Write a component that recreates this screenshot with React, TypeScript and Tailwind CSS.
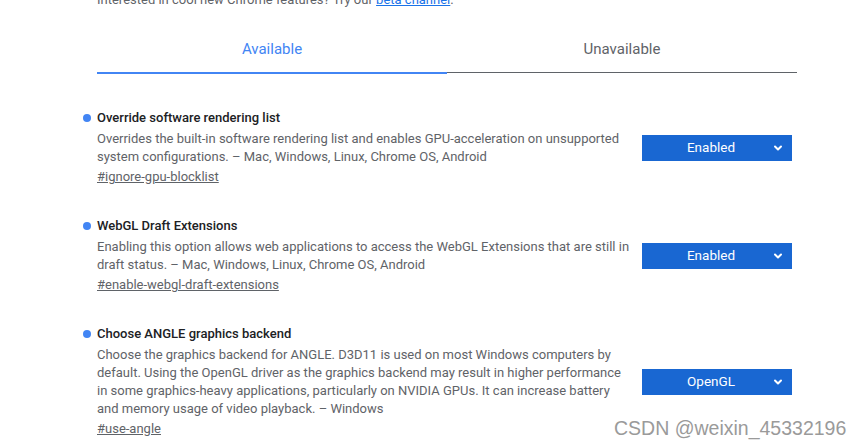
import { ChevronDown } from 'lucide-react'

type Flag = {
  title: string
  desc: string
  tag: string
  value: string
}

const flags: Flag[] = [
  {
    title: 'Override software rendering list',
    desc: 'Overrides the built-in software rendering list and enables GPU-acceleration on unsupported system configurations. – Mac, Windows, Linux, Chrome OS, Android',
    tag: '#ignore-gpu-blocklist',
    value: 'Enabled',
  },
  {
    title: 'WebGL Draft Extensions',
    desc: 'Enabling this option allows web applications to access the WebGL Extensions that are still in draft status. – Mac, Windows, Linux, Chrome OS, Android',
    tag: '#enable-webgl-draft-extensions',
    value: 'Enabled',
  },
  {
    title: 'Choose ANGLE graphics backend',
    desc: 'Choose the graphics backend for ANGLE. D3D11 is used on most Windows computers by default. Using the OpenGL driver as the graphics backend may result in higher performance in some graphics-heavy applications, particularly on NVIDIA GPUs. It can increase battery and memory usage of video playback. – Windows',
    tag: '#use-angle',
    value: 'OpenGL',
  },
]

function FlagRow({ flag }: { flag: Flag }) {
  return (
    <div className="flex items-center justify-between pr-[5px]">
      <div className="w-[534px]">
        <div className="flex items-center -ml-[14px] text-[13px] leading-[18px] font-medium text-[#202124]">
          <span className="w-2 h-2 rounded-full bg-[#4285f4] mr-[6px] shrink-0" />
          <span>{flag.title}</span>
        </div>
        <p className="mt-[3px] text-[13px] leading-[18px] text-[#5f6368]">{flag.desc}</p>
        <a className="block mt-[2px] text-[13px] leading-[18px] text-[#5f6368] underline">
          {flag.tag}
        </a>
      </div>
      <div className="w-[150px] h-[26px] bg-[#1967d2] text-white text-[13.5px] flex items-center pl-2">
        <span className="flex-1 text-center">{flag.value}</span>
        <ChevronDown className="w-3 h-3 mr-[8px]" strokeWidth={4} />
      </div>
    </div>
  )
}

export default function App() {
  return (
    <div className="relative w-[861px] h-[447px] overflow-hidden bg-white font-['Roboto','Liberation_Sans',sans-serif]">
      <div className="ml-[97px] w-[700px]">
        <p className="-mt-[9px] text-[13px] leading-[18px] text-[#5f6368]">
          Interested in cool new Chrome features? Try our{' '}
          <a className="text-[#1a73e8] underline">beta channel</a>.
        </p>

        <div className="flex items-start">
          <div className="w-[350px] pt-[30px] pb-[12px] text-center text-[15px] leading-[21px] text-[#4285f4] border-b-2 border-[#4285f4]">
            Available
          </div>
          <div className="w-[350px] pt-[30px] pb-[12px] text-center text-[15px] leading-[21px] text-[#5f6368] border-b border-[#5f6368]">
            Unavailable
          </div>
        </div>

        <div className="mt-[35px] flex flex-col gap-[31px]">
          {flags.map((f) => (
            <FlagRow key={f.tag} flag={f} />
          ))}
        </div>
      </div>

      <div className="absolute left-[614px] top-[416px] text-[19.5px] leading-[24px] text-[#9a9a9a] font-['Liberation_Sans',sans-serif]">
        CSDN @weixin_45332196
      </div>
    </div>
  )
}
